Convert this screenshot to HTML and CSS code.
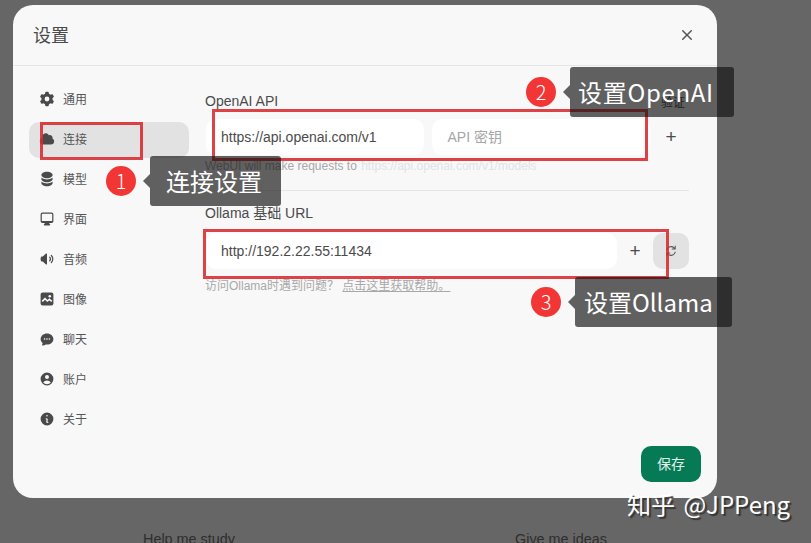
FILE: index.html
```html
<!DOCTYPE html>
<html lang="zh-CN">
<head>
  <meta charset="UTF-8">
  <meta name="viewport" content="width=device-width, initial-scale=1.0">
  <title>设置</title>
  <link rel="stylesheet" href="styles.css">
</head>
<body>
  <!-- page behind the dialog -->
  <div class="backdrop">
    <div class="prompt prompt-study">Help me study</div>
    <div class="prompt prompt-ideas">Give me ideas</div>
  </div>

  <div class="modal">
    <div class="modal-header">
      <div class="modal-title">设置</div>
      <svg class="close-icon" viewBox="0 0 20 20" fill="currentColor"><path d="M6.28 5.22a.75.75 0 00-1.06 1.06L8.94 10l-3.72 3.72a.75.75 0 101.06 1.06L10 11.06l3.72 3.72a.75.75 0 101.06-1.06L11.06 10l3.72-3.72a.75.75 0 00-1.06-1.06L10 8.94 6.28 5.22z"/></svg>
    </div>

    <div class="modal-body">
      <div class="sidebar">
        <div class="tab">
          <svg viewBox="0 0 20 20" fill="currentColor"><path fill-rule="evenodd" d="M7.84 1.804A1 1 0 018.82 1h2.36a1 1 0 01.98.804l.331 1.652a6.993 6.993 0 011.929 1.115l1.598-.54a1 1 0 011.186.447l1.18 2.044a1 1 0 01-.205 1.251l-1.267 1.113a7.047 7.047 0 010 2.228l1.267 1.113a1 1 0 01.206 1.25l-1.18 2.045a1 1 0 01-1.187.447l-1.598-.54a6.993 6.993 0 01-1.929 1.115l-.33 1.652a1 1 0 01-.98.804H8.82a1 1 0 01-.98-.804l-.331-1.652a6.993 6.993 0 01-1.929-1.115l-1.598.54a1 1 0 01-1.186-.447l-1.18-2.044a1 1 0 01.205-1.251l1.267-1.114a7.05 7.05 0 010-2.227L1.821 7.773a1 1 0 01-.206-1.25l1.18-2.045a1 1 0 011.187-.447l1.598.54A6.993 6.993 0 017.51 3.456l.33-1.652zM10 13a3 3 0 100-6 3 3 0 000 6z"/></svg>
          <span>通用</span>
        </div>
        <div class="tab active">
          <svg viewBox="0 0 20 20" fill="currentColor"><path d="M1 12.5A4.5 4.5 0 005.5 17H15a4 4 0 001.866-7.539 3.504 3.504 0 00-4.504-4.272A4.5 4.5 0 004.06 8.235 4.502 4.502 0 001 12.5z"/></svg>
          <span>连接</span>
        </div>
        <div class="tab">
          <svg viewBox="0 0 20 20" fill="currentColor"><path d="M10 1c3.866 0 7 1.79 7 4s-3.134 4-7 4-7-1.79-7-4 3.134-4 7-4zm5.694 8.13c.464-.264.91-.583 1.306-.952V10c0 2.21-3.134 4-7 4s-7-1.79-7-4V8.178c.396.37.842.688 1.306.953C5.838 10.006 7.854 10.5 10 10.5s4.162-.494 5.694-1.37zM3 13.179V15c0 2.21 3.134 4 7 4s7-1.79 7-4v-1.822c-.396.37-.842.688-1.306.953-1.532.875-3.548 1.369-5.694 1.369s-4.162-.494-5.694-1.37A7.009 7.009 0 013 13.179z"/></svg>
          <span>模型</span>
        </div>
        <div class="tab">
          <svg viewBox="0 0 20 20" fill="currentColor"><path fill-rule="evenodd" d="M2 4.25A2.25 2.25 0 014.25 2h11.5A2.25 2.25 0 0118 4.25v8.5A2.25 2.25 0 0115.75 15h-3.105a3.501 3.501 0 001.1 1.677A.75.75 0 0113.26 18H6.74a.75.75 0 01-.484-1.323A3.501 3.501 0 007.355 15H4.25A2.25 2.25 0 012 12.75v-8.5zm1.5 0a.75.75 0 01.75-.75h11.5a.75.75 0 01.75.75v7.5a.75.75 0 01-.75.75H4.25a.75.75 0 01-.75-.75v-7.5z"/></svg>
          <span>界面</span>
        </div>
        <div class="tab">
          <svg viewBox="0 0 20 20" fill="currentColor"><path d="M10 3.75a.75.75 0 00-1.264-.546L4.703 7H3.167a.75.75 0 00-.7.48A6.985 6.985 0 002 10c0 .887.165 1.737.468 2.52.111.29.39.48.7.48h1.535l4.033 3.796A.75.75 0 0010 16.25V3.75zM15.95 5.05a.75.75 0 00-1.06 1.061 5.5 5.5 0 010 7.778.75.75 0 001.06 1.06 7 7 0 000-9.899z"/><path d="M13.829 7.172a.75.75 0 00-1.061 1.06 2.5 2.5 0 010 3.536.75.75 0 001.06 1.06 4 4 0 000-5.656z"/></svg>
          <span>音频</span>
        </div>
        <div class="tab">
          <svg viewBox="0 0 20 20" fill="currentColor"><rect x="2" y="2" width="16" height="16" rx="2.5"/><circle cx="13.5" cy="6.5" r="1.6" fill="#f8f8f8"/><path d="M4 13l3.5-3.5 3 3 2.5-2 3 2.5" fill="none" stroke="#f8f8f8" stroke-width="2"/></svg>
          <span>图像</span>
        </div>
        <div class="tab">
          <svg viewBox="0 0 20 20" fill="currentColor"><path fill-rule="evenodd" d="M10 3c-4.31 0-8 3.033-8 7 0 2.024.978 3.825 2.499 5.085a3.478 3.478 0 01-.522 1.756.75.75 0 00.584 1.143 5.976 5.976 0 003.936-1.108c.487.082.99.124 1.503.124 4.31 0 8-3.033 8-7s-3.69-7-8-7zm0 8a1 1 0 100-2 1 1 0 000 2zm-2-1a1 1 0 11-2 0 1 1 0 012 0zm5 1a1 1 0 100-2 1 1 0 000 2z"/></svg>
          <span>聊天</span>
        </div>
        <div class="tab">
          <svg viewBox="0 0 20 20" fill="currentColor"><path fill-rule="evenodd" d="M18 10a8 8 0 11-16 0 8 8 0 0116 0zm-5.5-2.5a2.5 2.5 0 11-5 0 2.5 2.5 0 015 0zM10 12a5.99 5.99 0 00-4.793 2.39A6.483 6.483 0 0010 16.5a6.483 6.483 0 004.793-2.11A5.99 5.99 0 0010 12z"/></svg>
          <span>账户</span>
        </div>
        <div class="tab">
          <svg viewBox="0 0 20 20" fill="currentColor"><path fill-rule="evenodd" d="M18 10a8 8 0 11-16 0 8 8 0 0116 0zm-7-4a1 1 0 11-2 0 1 1 0 012 0zM9 9a.75.75 0 000 1.5h.253a.25.25 0 01.244.304l-.459 2.066A1.75 1.75 0 0010.747 15H11a.75.75 0 000-1.5h-.253a.25.25 0 01-.244-.304l.459-2.066A1.75 1.75 0 009.253 9H9z"/></svg>
          <span>关于</span>
        </div>
      </div>

      <div class="content">
        <div class="label-row">
          <div class="field-label">OpenAI API</div>
          <div class="verify">验证</div>
        </div>
        <div class="field-row">
          <div class="input">https://api.openai.com/v1</div>
          <div class="input placeholder">API 密钥</div>
          <div class="icon-btn plus">+</div>
        </div>
        <div class="help">WebUI will make requests to <span class="help-link">https://api.openai.com/v1/models</span></div>

        <hr class="divider">

        <div class="field-label">Ollama 基础 URL</div>
        <div class="field-row ollama-row">
          <div class="input">http://192.2.22.55:11434</div>
          <div class="icon-btn plus">+</div>
          <div class="icon-btn refresh">
            <svg viewBox="0 0 20 20" fill="currentColor"><path fill-rule="evenodd" d="M15.312 11.424a5.5 5.5 0 01-9.201 2.466l-.312-.311h2.433a.75.75 0 000-1.5H3.989a.75.75 0 00-.75.75v4.242a.75.75 0 001.5 0v-2.43l.31.31a7 7 0 0011.712-3.138.75.75 0 00-1.449-.39zm1.23-3.723a.75.75 0 00.219-.53V2.929a.75.75 0 00-1.5 0V5.36l-.31-.31A7 7 0 003.239 8.188a.75.75 0 101.448.389A5.5 5.5 0 0113.89 6.11l.311.31h-2.432a.75.75 0 000 1.5h4.243a.75.75 0 00.53-.219z"/></svg>
          </div>
        </div>
        <div class="help ollama-help">访问Ollama时遇到问题？ <span class="help-underline">点击这里获取帮助。</span></div>

        <div class="actions">
          <div class="save-btn">保存</div>
        </div>
      </div>
    </div>
  </div>

  <!-- annotations drawn on top of the screenshot -->
  <div class="mark mark-tab"></div>
  <div class="mark mark-openai"></div>
  <div class="mark mark-ollama"></div>

  <div class="note note-1"><span class="num">1</span><span class="bubble">连接设置</span></div>
  <div class="note note-2"><span class="num">2</span><span class="bubble">设置OpenAI</span></div>
  <div class="note note-3"><span class="num">3</span><span class="bubble">设置Ollama</span></div>

  <div class="watermark">知乎 @JPPeng</div>
</body>
</html>
```

FILE: styles.css
```css
html, body {
  margin: 0;
  height: 100%;
}
body {
  position: relative;
  width: 811px;
  height: 543px;
  overflow: hidden;
  background-color: #666;
  font-family: "Liberation Sans", "Noto Sans CJK SC", sans-serif;
  color: #4b4b4b;
}

.backdrop .prompt {
  position: absolute;
  top: 531px;
  font-size: 14.4px;
  color: #2e2e2e;
}
.prompt-study { left: 143px; }
.prompt-ideas { left: 515px; }

.modal {
  position: absolute;
  top: 5px;
  left: 13px;
  width: 704px;
  height: 493px;
  display: flex;
  flex-direction: column;
  background: #f8f8f8;
  border-radius: 20px;
}
.modal-header {
  display: flex;
  align-items: center;
  justify-content: space-between;
  height: 60px;
  padding: 0 20px;
  border-bottom: 1px solid #e6e6e6;
}
.modal-title {
  font-size: 18px;
  line-height: 62px;
  height: 60px;
  color: #4a4a4a;
}
.close-icon {
  width: 20px;
  height: 20px;
  color: #555;
}

.modal-body {
  flex: 1;
  display: flex;
  min-height: 0;
}

.sidebar {
  width: 160px;
  margin-left: 16px;
  padding-top: 16px;
  display: flex;
  flex-direction: column;
  gap: 4px;
}
.tab {
  box-sizing: border-box;
  display: flex;
  align-items: center;
  gap: 8px;
  height: 36px;
  padding: 0 0 2px 10px;
  border-radius: 10px;
  font-size: 12px;
  color: #555;
}
.tab span {
  margin-bottom: 2px;
}
.tab svg {
  width: 16px;
  height: 16px;
  color: #4a4a4a;
}
.tab.active {
  background: #e2e2e2;
}

.content {
  flex: 1;
  margin-left: 16px;
  margin-right: 28px;
  padding-top: 26px;
  display: flex;
  flex-direction: column;
}
.label-row {
  display: flex;
  justify-content: space-between;
  height: 18px;
}
.verify {
  margin-right: 4px;
  padding-top: 2px;
  font-size: 12px;
  line-height: 18px;
  color: #444;
}
.field-label {
  font-size: 14px;
  line-height: 18px;
  color: #4b4b4b;
}
.field-row {
  display: flex;
  align-items: center;
  margin-top: 9px;
  padding-left: 1px;
}
.ollama-row {
  margin-top: 11px;
}
.input {
  flex: 1;
  height: 36px;
  line-height: 36px;
  padding-left: 15px;
  background: #fff;
  border-radius: 10px;
  font-size: 14px;
  color: #4b4b4b;
}
.input + .input {
  margin-left: 8px;
}
.placeholder {
  padding-left: 16px;
  flex-basis: 0;
  color: #a6a6a6;
}
.icon-btn {
  width: 36px;
  height: 36px;
  flex: none;
  display: flex;
  align-items: center;
  justify-content: center;
  border-radius: 10px;
}
.plus {
  font-size: 19px;
  color: #4b4b4b;
}
.input + .input + .plus {
  margin-left: 3px;
}
.refresh {
  background: #e2e2e2;
  color: #555;
}
.refresh svg {
  width: 14px;
  height: 14px;
}
.help {
  margin-top: 3px;
  font-size: 12px;
  line-height: 16px;
  color: #a8a8a8;
}
.ollama-help {
  margin-top: 9px;
}
.help-link {
  margin-left: 1px;
  color: #e0e3e7;
}
.help-underline {
  margin-left: 0;
  text-decoration: underline;
}
.divider {
  width: 100%;
  margin: 16px 0 13px;
  border: none;
  border-top: 1px solid #e6e6e6;
}

.actions {
  margin-top: auto;
  margin-bottom: 16px;
  margin-right: -12px;
  display: flex;
  justify-content: flex-end;
}
.save-btn {
  width: 60px;
  height: 36px;
  line-height: 36px;
  text-align: center;
  background: #057a55;
  border-radius: 10px;
  font-size: 14px;
  color: #e2f3ec;
}

/* red boxes */
.mark {
  position: absolute;
  box-sizing: border-box;
  border: 3px solid rgba(216, 40, 46, 0.88);
}
.mark-tab { left: 40px; top: 122px; width: 103px; height: 38px; }
.mark-openai { left: 212px; top: 109px; width: 436px; height: 52px; }
.mark-ollama { left: 203px; top: 229px; width: 466px; height: 50px; }

/* numbered callouts */
.note {
  position: absolute;
  display: flex;
  align-items: center;
  gap: 14px;
}
.note-1 { left: 106px; top: 156px; }
.note-2 { left: 526px; top: 67px; }
.note-3 { left: 531px; top: 277px; }
.num {
  width: 30px;
  height: 30px;
  border-radius: 50%;
  background: #f23535;
  color: #fff;
  font-family: "Noto Sans CJK SC", sans-serif;
  font-weight: 300;
  font-size: 20px;
  line-height: 29px;
  text-align: center;
}
.bubble {
  position: relative;
  height: 50px;
  line-height: 50px;
  padding: 0 19px 0 9px;
  border-radius: 3px;
  background: rgba(16, 16, 16, 0.66);
  color: #fff;
  font-family: "Noto Sans CJK SC", sans-serif;
  font-size: 24px;
  white-space: nowrap;
}
.bubble::before {
  content: "";
  position: absolute;
  left: -7px;
  top: 18px;
  border-style: solid;
  border-width: 7px 7px 7px 0;
  border-color: transparent rgba(16, 16, 16, 0.66) transparent transparent;
}
.note-1 .bubble { padding: 0 19px 0 16px; }
.note-2 .bubble {
  padding: 0 20px 0 8px;
  letter-spacing: 0.7px;
}

.watermark {
  position: absolute;
  left: 627px;
  top: 487px;
  font-family: "Noto Sans CJK SC", sans-serif;
  font-size: 24px;
  line-height: 34px;
  word-spacing: 3px;
  color: #fff;
  text-shadow: 2px 2px 1px #333;
  white-space: nowrap;
}
```
